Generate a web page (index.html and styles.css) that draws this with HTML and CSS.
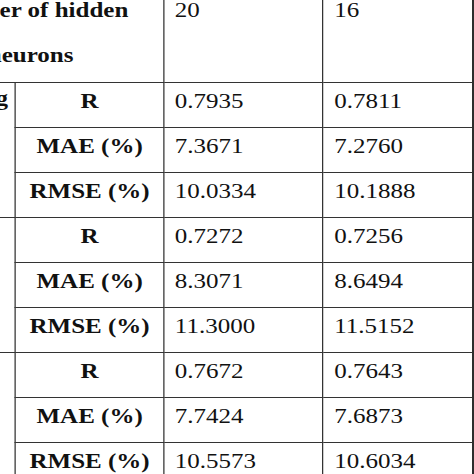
FILE: index.html
```html
<!DOCTYPE html>
<html>
<head>
<meta charset="utf-8">
<link rel="stylesheet" href="styles.css">
</head>
<body>
<div class="page">
  <div class="sheet">
    <table class="results">
      <colgroup>
        <col class="c0">
        <col class="c1">
        <col class="c2">
        <col class="c3">
      </colgroup>
      <tr class="head">
        <th colspan="2" class="title">Number of hidden<br>neurons</th>
        <td class="num">20</td>
        <td class="num last">16</td>
      </tr>
      <tr class="row">
        <th rowspan="3" class="group">Training</th>
        <th class="metric">R</th>
        <td class="num">0.7935</td>
        <td class="num last">0.7811</td>
      </tr>
      <tr class="row">
        <th class="metric">MAE (%)</th>
        <td class="num">7.3671</td>
        <td class="num last">7.2760</td>
      </tr>
      <tr class="row">
        <th class="metric">RMSE (%)</th>
        <td class="num">10.0334</td>
        <td class="num last">10.1888</td>
      </tr>
      <tr class="row">
        <th rowspan="3" class="group">Test</th>
        <th class="metric">R</th>
        <td class="num">0.7272</td>
        <td class="num last">0.7256</td>
      </tr>
      <tr class="row">
        <th class="metric">MAE (%)</th>
        <td class="num">8.3071</td>
        <td class="num last">8.6494</td>
      </tr>
      <tr class="row">
        <th class="metric">RMSE (%)</th>
        <td class="num">11.3000</td>
        <td class="num last">11.5152</td>
      </tr>
      <tr class="row">
        <th rowspan="3" class="group">All</th>
        <th class="metric">R</th>
        <td class="num">0.7672</td>
        <td class="num last">0.7643</td>
      </tr>
      <tr class="row">
        <th class="metric">MAE (%)</th>
        <td class="num">7.7424</td>
        <td class="num last">7.6873</td>
      </tr>
      <tr class="row">
        <th class="metric">RMSE (%)</th>
        <td class="num">10.5573</td>
        <td class="num last">10.6034</td>
      </tr>
    </table>
  </div>
</div>
</body>
</html>
```

FILE: styles.css
```css
html, body {
  margin: 0;
  padding: 0;
  background: #ffffff;
}

.page {
  width: 474px;
  height: 474px;
  overflow: hidden;
  background: #ffffff;
}

.sheet {
  width: 462px;
  margin-left: -103px;
  margin-top: -12px;
  transform: scaleX(1.25);
  transform-origin: 0 0;
}

.results {
  border-collapse: collapse;
  table-layout: fixed;
  width: 460.7px;
  font-family: "Liberation Serif", "Times New Roman", serif;
  font-size: 20px;
  color: #111111;
}

.c0 { width: 94.4px; }
.c1 { width: 118.4px; }
.c2 { width: 127.5px; }
.c3 { width: 120.4px; }

.results th,
.results td {
  border: 1px solid #333333;
  padding: 0;
  vertical-align: top;
  white-space: nowrap;
  overflow: hidden;
}

.results .last {
  border-right: 2px solid #2e2e2e;
}

.results .head th,
.results .head td {
  border-top: none;
  line-height: 45px;
  height: 90px;
  padding-bottom: 4px;
}

.results .title {
  font-weight: bold;
  text-align: center;
}

.results .row {
  height: 45px;
}

.results .row th,
.results .row td {
  line-height: 36px;
}

.results .row .group {
  font-weight: bold;
  text-align: center;
  padding-left: 8px;
  line-height: 30px;
}

.results .metric {
  font-weight: bold;
  text-align: center;
}

.results td.num {
  font-weight: normal;
  text-align: left;
  padding-left: 8.5px;
}
```
